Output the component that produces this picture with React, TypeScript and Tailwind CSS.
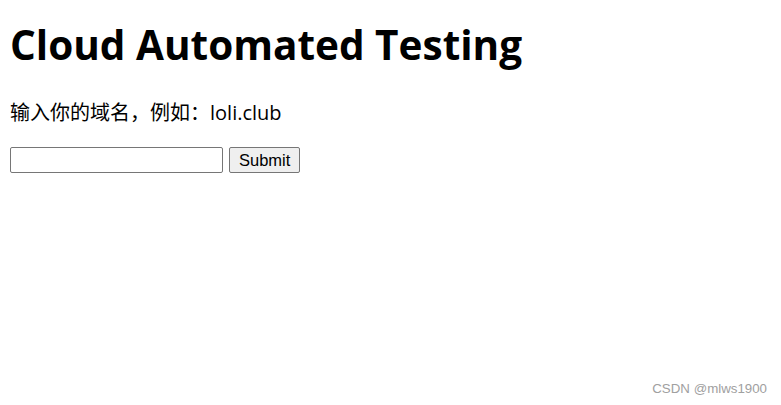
import React from 'react';

export default function App() {
  return (
    <div className="relative min-h-[405px] bg-white px-[10px] pt-[18px] text-black font-['Open_Sans','Noto_Sans_CJK_SC',sans-serif]">
      <h1 className="text-[40.5px] font-bold leading-[53px]">Cloud Automated Testing</h1>
      <p className="mt-[29px] text-[20px] leading-[26px]">输入你的域名，例如：loli.club</p>
      <form className="mt-[21px] flex items-center gap-[6px]" onSubmit={(e) => e.preventDefault()}>
        <input
          type="text"
          className="h-[26px] w-[213px] rounded-[2px] border border-[#767676] bg-white px-[2px] text-[16px]"
        />
        <button
          type="submit"
          className="h-[26px] rounded-[2px] border border-[#767676] bg-[#efefef] px-[9px] text-[16.5px] leading-none font-['Liberation_Sans',Arial,sans-serif]"
        >
          Submit
        </button>
      </form>
      <span className="absolute bottom-[6px] right-[14px] text-[13.3px] text-[#a0a0a0] font-['Liberation_Sans',Arial,sans-serif]">
        CSDN @mlws1900
      </span>
    </div>
  );
}
